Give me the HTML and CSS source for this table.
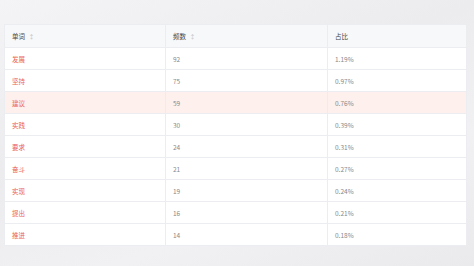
FILE: index.html
```html
<!DOCTYPE html>
<html lang="zh">
<head>
<meta charset="utf-8">
<link rel="stylesheet" href="styles.css">
</head>
<body>
<div class="page">
  <div class="card">
    <table class="tbl">
      <colgroup><col class="c1"><col class="c2"><col class="c3"></colgroup>
      <thead>
        <tr><th>单词 <span class="sort">↕</span></th><th>频数 <span class="sort">↕</span></th><th>占比</th></tr>
      </thead>
      <tbody>
        <tr><td class="w">发展</td><td>92</td><td>1.19%</td></tr>
        <tr><td class="w">坚持</td><td>75</td><td>0.97%</td></tr>
        <tr class="hl"><td class="w">建议</td><td>59</td><td>0.76%</td></tr>
        <tr><td class="w">实践</td><td>30</td><td>0.39%</td></tr>
        <tr><td class="w">要求</td><td>24</td><td>0.31%</td></tr>
        <tr><td class="w">奋斗</td><td>21</td><td>0.27%</td></tr>
        <tr><td class="w">实现</td><td>19</td><td>0.24%</td></tr>
        <tr><td class="w">提出</td><td>16</td><td>0.21%</td></tr>
        <tr><td class="w">推进</td><td>14</td><td>0.18%</td></tr>
      </tbody>
    </table>
  </div>
</div>
</body>
</html>
```
FILE: styles.css
```css
html, body {
  margin: 0;
  padding: 0;
}
body {
  width: 474px;
  height: 266px;
  overflow: hidden;
  background: linear-gradient(160deg, #f4f4f6 0%, #ececef 40%, #f1f1f3 70%, #eaeaed 100%);
  font-family: "Noto Sans CJK SC", "Noto Sans", sans-serif;
}
.page {
  padding: 24px 8px 0 4px;
}
.card {
  width: 462px;
  background: #fff;
}
.tbl {
  width: 100%;
  border-collapse: collapse;
  table-layout: fixed;
  font-size: 6.5px;
}
.c1 { width: 161px; }
.c2 { width: 162px; }
.c3 { width: 139px; }
.tbl th, .tbl td {
  text-align: left;
  padding: 0 0 0 7px;
  border: 1px solid #ebedf0;
  border-top: none;
  line-height: 10px;
  white-space: nowrap;
}
.tbl th {
  height: 22px;
  background: #f7f8fa;
  color: #444;
  font-weight: normal;
  border-top: 1px solid #ebedf0;
}
.tbl td {
  height: 21px;
  color: #888;
}
.tbl td.w {
  color: #e8625b;
}
.tbl tr.hl td {
  background: #fdf0ed;
}
.sort {
  color: #c0c0c0;
  font-size: 6px;
  margin-left: 2px;
}
```
